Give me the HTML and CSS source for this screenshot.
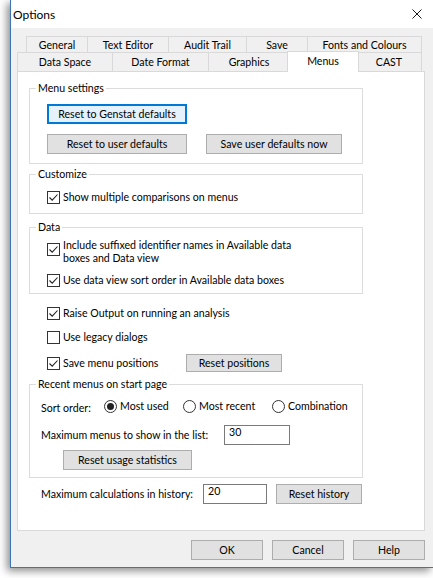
FILE: index.html
```html
<!DOCTYPE html>
<html>
<head>
<meta charset="utf-8">
<title>Options</title>
<link rel="stylesheet" href="styles.css">
</head>
<body>
<div class="desktop">
  <div class="window">
    <div class="titlebar">
      <span class="title">Options</span>
      <svg class="close" width="10" height="10" viewBox="0 0 10 10"><path d="M0.5 0.5 L9.5 9.5 M9.5 0.5 L0.5 9.5" stroke="#1a1a1a" stroke-width="1" fill="none"/></svg>
    </div>
    <div class="body">
      <div class="tabs">
        <div class="tabrow back">
          <div class="tab t-general">General</div>
          <div class="tab t-text">Text Editor</div>
          <div class="tab t-audit">Audit Trail</div>
          <div class="tab t-save">Save</div>
          <div class="tab t-fonts last">Fonts and Colours</div>
        </div>
        <div class="tabrow front">
          <div class="tab t-data">Data Space</div>
          <div class="tab t-date">Date Format</div>
          <div class="tab t-graphics">Graphics</div>
          <div class="tab t-menus selected">Menus</div>
          <div class="tab t-cast last">CAST</div>
        </div>
      </div>
      <div class="panel">
        <fieldset class="group g-menu">
          <legend>Menu settings</legend>
          <div class="content c-wide">
            <div class="btn btn-default w-genstat">Reset to Genstat defaults</div>
            <div class="btn-row">
              <div class="btn w-user">Reset to user defaults</div>
              <div class="btn w-saveuser">Save user defaults now</div>
            </div>
          </div>
        </fieldset>

        <fieldset class="group g-custom">
          <legend>Customize</legend>
          <div class="content c-wide">
            <div class="check"><span class="box checked"><svg width="11" height="11" viewBox="0 0 11 11"><path d="M1.5 5.5 L4.2 8.2 L9.5 2.5" stroke="#222" stroke-width="1.1" fill="none"/></svg></span><span>Show multiple comparisons on menus</span></div>
          </div>
        </fieldset>

        <fieldset class="group g-data">
          <legend>Data</legend>
          <div class="content c-wide">
            <div class="check multi"><span class="box checked"><svg width="11" height="11" viewBox="0 0 11 11"><path d="M1.5 5.5 L4.2 8.2 L9.5 2.5" stroke="#222" stroke-width="1.1" fill="none"/></svg></span><span>Include suffixed identifier names in Available data<br>boxes and Data view</span></div>
            <div class="check second"><span class="box checked"><svg width="11" height="11" viewBox="0 0 11 11"><path d="M1.5 5.5 L4.2 8.2 L9.5 2.5" stroke="#222" stroke-width="1.1" fill="none"/></svg></span><span>Use data view sort order in Available data boxes</span></div>
          </div>
        </fieldset>

        <div class="check loose raise"><span class="box checked"><svg width="11" height="11" viewBox="0 0 11 11"><path d="M1.5 5.5 L4.2 8.2 L9.5 2.5" stroke="#222" stroke-width="1.1" fill="none"/></svg></span><span>Raise Output on running an analysis</span></div>
        <div class="check loose legacy"><span class="box"></span><span>Use legacy dialogs</span></div>
        <div class="save-row">
          <div class="check save-check"><span class="box checked"><svg width="11" height="11" viewBox="0 0 11 11"><path d="M1.5 5.5 L4.2 8.2 L9.5 2.5" stroke="#222" stroke-width="1.1" fill="none"/></svg></span><span>Save menu positions</span></div>
          <div class="btn btn-small w-positions">Reset positions</div>
        </div>

        <fieldset class="group g-recent">
          <legend>Recent menus on start page</legend>
          <div class="content c-narrow">
            <div class="sort-row">
              <span class="sort-label">Sort order:</span>
              <span class="radio r-used"><span class="circle on"></span><span>Most used</span></span>
              <span class="radio r-recent"><span class="circle"></span><span>Most recent</span></span>
              <span class="radio"><span class="circle"></span><span>Combination</span></span>
            </div>
            <div class="field-row max-menus">
              <span class="field-label l-menus">Maximum menus to show in the list:</span>
              <div class="input w-menus">30</div>
            </div>
            <div class="btn w-usage">Reset usage statistics</div>
          </div>
        </fieldset>

        <div class="field-row history">
          <span class="field-label l-history">Maximum calculations in history:</span>
          <div class="input w-history">20</div>
          <div class="btn w-resethist">Reset history</div>
        </div>
      </div>
      <div class="footer">
        <div class="btn w-foot">OK</div>
        <div class="btn w-foot">Cancel</div>
        <div class="btn w-foot">Help</div>
      </div>
    </div>
  </div>
</div>
</body>
</html>
```

FILE: styles.css
```css
* { box-sizing: border-box; }
html, body {
  margin: 0;
  padding: 0;
  background: #ffffff;
  overflow: hidden;
}
body {
  font-family: Lato, "Segoe UI", "Liberation Sans", sans-serif;
  font-size: 10.6px;
  color: #000;
}
.desktop {
  width: 433px;
  height: 578px;
  padding-left: 10px;
}
.window {
  width: 423px;
  background: #f0f0f0;
  border-left: 1px solid #3b76b1;
  border-bottom: 1px solid #3b76b1;
  box-shadow: -3px 3px 8px rgba(0, 0, 0, 0.45);
}
.titlebar {
  height: 28px;
  background: #fff;
  display: flex;
  align-items: center;
  justify-content: space-between;
  padding: 0 11px 0 2px;
  font-size: 12px;
}
.close { display: block; }
.body {
  padding: 8px 8px 7px 6px;
}

/* tabs */
.tabrow { display: flex; }
.back { height: 16px; margin-left: 9px; }
.front { height: 19px; }
.tab {
  border: 1px solid #d9d9d9;
  border-bottom: none;
  border-right: none;
  background: #f0f0f0;
  display: flex;
  align-items: center;
  justify-content: center;
  white-space: nowrap;
  flex: none;
}
.back .tab { height: 16px; }
.front .tab { height: 19px; }
.tab.last { border-right: 1px solid #d9d9d9; }
.t-general { width: 61px; }
.t-text { width: 81px; }
.t-audit { width: 78px; }
.t-save { width: 61px; }
.t-fonts { width: 115px; }
.t-data { width: 95px; }
.t-date { width: 96px; }
.t-graphics { width: 81px; }
.t-menus { width: 72px; }
.t-cast { width: 66px; }
.front .tab.selected {
  background: #fff;
  height: 21px;
  margin: -1px -3px 0 -2px;
  padding-bottom: 2px;
  border-right: 1px solid #d9d9d9;
  position: relative;
  z-index: 2;
}

/* panel */
.panel {
  background: #fff;
  border: 1px solid #d9d9d9;
  height: 460px;
  padding-top: 0;
}
.group {
  margin: 0 0 0 11px;
  width: 334px;
  border: 1px solid #dcdcdc;
  padding: 0 8px 0 6px;
  min-inline-size: auto;
}
.group legend {
  padding: 0 2px;
  line-height: 14px;
}
.c-wide { padding-left: 11px; }
.c-narrow { padding-left: 5px; }

.g-menu { margin-top: 9px; padding-top: 9px; padding-bottom: 9px; }
.g-custom { margin-top: 3px; padding-top: 9px; padding-bottom: 9px; }
.g-data { margin-top: 6px; padding-top: 5px; padding-bottom: 6px; }
.g-recent { margin-top: 5px; padding-top: 8px; padding-bottom: 7px; }

/* buttons */
.btn {
  height: 20px;
  border: 1px solid #adadad;
  background: #e1e1e1;
  display: flex;
  align-items: center;
  justify-content: center;
  white-space: nowrap;
  flex: none;
}
.btn-default {
  border: 1px solid #0078d7;
  box-shadow: inset 0 0 0 1px #0078d7;
  background: #e5f1fb;
}
.btn-small { height: 18px; }
.btn-row {
  display: flex;
  gap: 19px;
  margin-top: 10px;
}
.w-genstat { width: 140px; }
.w-user { width: 140px; }
.w-saveuser { width: 136px; }
.w-positions { width: 96px; }
.w-usage { width: 129px; margin-left: 22px; margin-top: 5px; }
.w-resethist { width: 86px; margin-left: 9px; }
.w-foot { width: 72px; }

/* checkboxes */
.check {
  display: flex;
  align-items: center;
  height: 14px;
  line-height: 14px;
  white-space: nowrap;
}
.box {
  width: 13px;
  height: 13px;
  border: 1px solid #333;
  background: #fff;
  margin-right: 3px;
  flex: none;
  display: flex;
  align-items: center;
  justify-content: center;
}
.box svg { display: block; }
.check.multi {
  height: auto;
  align-items: flex-start;
  line-height: 13px;
}
.check.multi .box { margin-top: 4px; }
.check.second { margin-top: 8px; }
.check.loose { margin-left: 29px; }
.raise { margin-top: 12px; }
.legacy { margin-top: 10px; }
.save-row {
  display: flex;
  align-items: center;
  height: 18px;
  margin: 10px 0 0 29px;
}
.save-check { width: 139px; flex: none; }

/* radios */
.sort-row {
  display: flex;
  align-items: center;
  height: 14px;
  white-space: nowrap;
}
.sort-label { width: 63px; padding-top: 3px; flex: none; }
.radio { display: flex; align-items: center; flex: none; }
.r-used { width: 79px; }
.r-recent { width: 89px; }
.circle {
  width: 13px;
  height: 13px;
  border: 1px solid #333;
  border-radius: 50%;
  background: #fff;
  margin-right: 3px;
  display: flex;
  align-items: center;
  justify-content: center;
}
.circle.on::after {
  content: "";
  width: 7px;
  height: 7px;
  border-radius: 50%;
  background: #222;
}

/* fields */
.field-row {
  display: flex;
  align-items: center;
  height: 20px;
  white-space: nowrap;
}
.field-label { flex: none; }
.max-menus { margin-top: 12px; }
.l-menus { width: 183px; }
.input {
  height: 20px;
  border: 1px solid #7a7a7a;
  background: #fff;
  padding: 0 4px;
  line-height: 12px;
  flex: none;
}
.w-menus { width: 66px; }
.history { margin-top: 6px; padding-left: 23px; }
.l-history { width: 162px; }
.w-history { width: 64px; }

/* footer */
.footer {
  display: flex;
  justify-content: flex-end;
  gap: 9px;
  margin-top: 9px;
}
```
